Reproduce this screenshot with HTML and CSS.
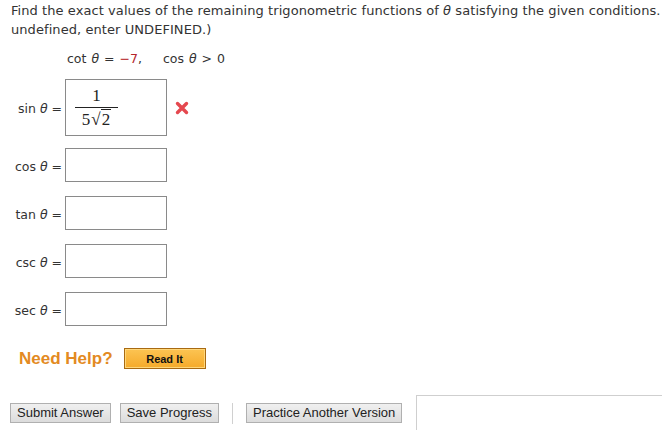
FILE: index.html
```html
<!DOCTYPE html>
<html>
<head>
<meta charset="utf-8">
<link rel="stylesheet" href="styles.css">
</head>
<body>
<div class="page">
  <div class="prompt">
    <div class="line">Find the exact values of the remaining trigonometric functions of <i class="th">θ</i> satisfying the given conditions.</div>
    <div class="line">undefined, enter UNDEFINED.)</div>
  </div>
  <div class="given">
    <span>cot <i class="th">θ</i> = <span class="neg">−7</span>,</span>
    <span class="g2">cos <i class="th">θ</i> &gt; 0</span>
  </div>
  <div class="rows">
    <div class="row row-sin">
      <span class="label">sin <i class="th">θ</i> =</span>
      <div class="box box-tall">
        <span class="frac">
          <span class="num">1</span>
          <span class="den">5<span class="rad">√</span><span class="radicand">2</span></span>
        </span>
      </div>
      <svg class="wrong" width="14" height="14" viewBox="0 0 14 14">
        <path d="M2.5 2.5 L11.5 11.5 M11.5 2.5 L2.5 11.5" stroke="#e5484f" stroke-width="3.4" stroke-linecap="round"/>
      </svg>
    </div>
    <div class="row">
      <span class="label">cos <i class="th">θ</i> =</span>
      <div class="box"></div>
    </div>
    <div class="row">
      <span class="label">tan <i class="th">θ</i> =</span>
      <div class="box"></div>
    </div>
    <div class="row">
      <span class="label">csc <i class="th">θ</i> =</span>
      <div class="box"></div>
    </div>
    <div class="row">
      <span class="label">sec <i class="th">θ</i> =</span>
      <div class="box"></div>
    </div>
  </div>
  <div class="help">
    <span class="need">Need Help?</span>
    <button class="readit">Read It</button>
  </div>
  <div class="actions">
    <button class="btn">Submit Answer</button>
    <button class="btn">Save Progress</button>
    <span class="sep"></span>
    <button class="btn">Practice Another Version</button>
    <div class="panel"></div>
  </div>
</div>
</body>
</html>
```
FILE: styles.css
```css
html, body {
  margin: 0;
  padding: 0;
  background: #fff;
  overflow: hidden;
}
.page {
  width: 662px;
  height: 430px;
  font-family: "DejaVu Sans", Verdana, sans-serif;
  font-size: 12.5px;
  color: #333;
}
.th {
  font-style: italic;
}
.prompt {
  padding: 1px 0 0 11px;
  line-height: 19px;
  font-size: 13px;
  letter-spacing: 0.07px;
}
.line {
  white-space: nowrap;
}
.given {
  margin: 11px 0 0 67px;
  line-height: 18px;
  white-space: nowrap;
  word-spacing: 1px;
}
.neg {
  color: #b5262b;
}
.g2 {
  margin-left: 16px;
}
.rows {
  margin-top: 11px;
  display: flex;
  flex-direction: column;
  gap: 14px;
}
.row {
  display: flex;
  align-items: center;
}
.row-sin {
  margin-bottom: -2px;
}
.label {
  padding-right: 3px;
  padding-top: 2px;
  box-sizing: border-box;
  width: 65px;
  text-align: right;
  white-space: nowrap;
}
.box {
  width: 102px;
  height: 34px;
  box-sizing: border-box;
  border: 1px solid #8a8a8a;
  background: #fff;
}
.box-tall {
  height: 57px;
  display: flex;
  align-items: center;
  padding-left: 9px;
}
.frac {
  display: inline-flex;
  flex-direction: column;
  align-items: center;
  font-family: "Liberation Serif", "Times New Roman", serif;
  font-size: 17px;
  color: #222;
  line-height: 18px;
}
.num {
  display: block;
  width: 43px;
  text-align: center;
  border-bottom: 1px solid #222;
  padding-bottom: 2px;
}
.den {
  display: block;
  padding-top: 3px;
}
.rad {
  margin-left: 1px;
}
.radicand {
  border-top: 1px solid #222;
  padding: 0 1px;
}
.wrong {
  margin-left: 8px;
  margin-top: 1px;
}
.help {
  margin-top: 22px;
  display: flex;
  align-items: center;
  padding-left: 19px;
}
.need {
  font-family: "Liberation Sans", Arial, sans-serif;
  font-weight: bold;
  font-size: 17px;
  color: #e38a22;
}
.readit {
  margin-left: 11px;
  width: 82px;
  height: 21px;
  padding: 0;
  border: 1px solid #a86a12;
  box-shadow: inset 0 0 0 1px #ffd77a;
  background: linear-gradient(#fcc453, #f5aa2a);
  font-family: "Liberation Sans", Arial, sans-serif;
  font-weight: bold;
  font-size: 11px;
  color: #111;
}
.actions {
  margin-top: 26px;
  display: flex;
  align-items: flex-start;
  padding-left: 10px;
  gap: 9px;
}
.btn {
  height: 20px;
  margin-top: 8px;
  padding: 0 6px;
  border: 1px solid #b0b0b0;
  background: linear-gradient(#f0f0f0, #dcdcdc);
  font-family: "Liberation Sans", Arial, sans-serif;
  font-size: 13px;
  color: #222;
  line-height: 18px;
}
.sep {
  width: 1px;
  height: 21px;
  margin: 8px 4px 0 4px;
  background: #d0d0d0;
}
.panel {
  margin-left: 5px;
  flex: 1;
  height: 40px;
  border-left: 1px solid #cfcfcf;
  border-top: 1px solid #cfcfcf;
}
```
